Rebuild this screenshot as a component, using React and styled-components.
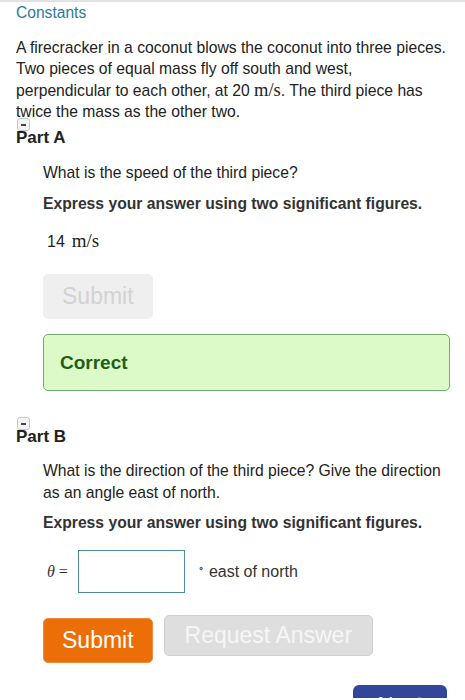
import React from "react";
import styled, { createGlobalStyle } from "styled-components";

const GlobalStyle = createGlobalStyle`
  body {
    margin: 0;
    background: #fff;
    font-family: "Liberation Sans", Arial, sans-serif;
    color: #333;
  }
`;

const Page = styled.div`
  border-top: 2px solid #e2e2e2;
  padding: 0 16px;
  width: 465px;
  box-sizing: border-box;
  height: 698px;
  overflow: hidden;
`;

const ConstantsLink = styled.div`
  color: #2b7c98;
  font-size: 15.6px;
  line-height: 20px;
  padding-top: 1px;
`;

const Intro = styled.p`
  margin: 14px 0 0;
  font-size: 15.7px;
  line-height: 21.3px;
  color: #222;
`;

const Math = styled.span`
  font-family: "Liberation Serif", "Times New Roman", serif;
  font-size: 18.5px;
  line-height: 1;
`;

const PartHeader = styled.div`
  position: relative;
  margin-top: ${(p) => p.$top}px;
  padding-top: 9px;
`;

const Toggle = styled.span`
  position: absolute;
  left: 1px;
  top: -1px;
  width: 11px;
  height: 11px;
  border: 1px solid #c8c8c8;
  border-radius: 3px;
  background: #f4f4f4;
  &::after {
    content: "";
    position: absolute;
    left: 3px;
    top: 5px;
    width: 5px;
    height: 2px;
    background: #444;
  }
`;

const PartTitle = styled.h2`
  margin: 0;
  font-size: 17px;
  font-weight: bold;
  line-height: 20px;
  color: #222;
`;

const PartBody = styled.div`
  padding-left: 27px;
`;

const Question = styled.p`
  margin: ${(p) => p.$top}px 0 0;
  font-size: 15.7px;
  line-height: 22px;
  color: #222;
`;

const Instruction = styled.p`
  margin: ${(p) => p.$top}px 0 0;
  font-size: 15.7px;
  line-height: 22px;
  font-weight: bold;
  color: #333;
`;

const AnswerLine = styled.div`
  margin-top: 15px;
  padding-left: 4px;
  font-size: 16px;
  line-height: 22px;
  color: #222;
  & span {
    margin-left: 7px;
    font-family: "Liberation Serif", "Times New Roman", serif;
    font-size: 19px;
  }
`;

const Button = styled.button`
  font-family: "Liberation Sans", Arial, sans-serif;
  font-size: 23px;
  border-radius: 5px;
  height: ${(p) => p.$h || 45}px;
  padding: 0 ${(p) => p.$px || 18}px;
  border: 1px solid ${(p) => p.$border};
  background: ${(p) => p.$bg};
  color: ${(p) => p.$color};
  cursor: pointer;
`;

const SubmitRow = styled.div`
  margin-top: ${(p) => p.$top}px;
  display: flex;
  align-items: flex-start;
  gap: 11px;
`;

const CorrectBox = styled.div`
  margin-top: 15px;
  height: 57px;
  box-sizing: border-box;
  border: 1px solid #72a96c;
  border-radius: 5px;
  background: #dcfac8;
  display: flex;
  align-items: center;
  padding-left: 16px;
  font-size: 19px;
  font-weight: bold;
  color: #1d5f14;
  margin-right: -1px;
`;

const InputRow = styled.div`
  margin-top: 16px;
  display: flex;
  align-items: center;
  padding-left: 4px;
`;

const Theta = styled.span`
  font-family: "Liberation Serif", "Times New Roman", serif;
  font-size: 16px;
  color: #333;
  & i {
    margin-right: 4px;
  }
`;

const AnswerInput = styled.input`
  margin-left: 10px;
  width: 107px;
  height: 43px;
  box-sizing: border-box;
  border: 1px solid #4f8a98;
  outline: none;
`;

const Unit = styled.span`
  margin-left: 13px;
  font-size: 16px;
  color: #333;
  & sup {
    font-size: 10px;
    margin-right: 5px;
  }
`;

const Footer = styled.div`
  margin-top: 22px;
  display: flex;
  justify-content: flex-end;
`;

const NextButton = styled.button`
  width: 94px;
  height: 40px;
  border: none;
  border-radius: 6px;
  background: #33479a;
  color: #fff;
  font-family: "Liberation Sans", Arial, sans-serif;
  font-size: 22px;
  margin-right: 2px;
`;

export default function App() {
  return (
    <>
      <GlobalStyle />
      <Page>
        <ConstantsLink>Constants</ConstantsLink>
        <Intro>
          A firecracker in a coconut blows the coconut into three pieces. Two
          pieces of equal mass fly off south and west, perpendicular to each
          other, at 20 <Math>m/s</Math>. The third piece has twice the mass as
          the other two.
        </Intro>

        <PartHeader $top={-3}>
          <Toggle />
          <PartTitle>Part A</PartTitle>
        </PartHeader>
        <PartBody>
          <Question $top={14}>What is the speed of the third piece?</Question>
          <Instruction $top={9}>
            Express your answer using two significant figures.
          </Instruction>
          <AnswerLine>
            14<span>m/s</span>
          </AnswerLine>
          <SubmitRow $top={21}>
            <Button $bg="#efefef" $border="#efefef" $color="#d2d2d2">
              Submit
            </Button>
          </SubmitRow>
          <CorrectBox>Correct</CorrectBox>
        </PartBody>

        <PartHeader $top={27}>
          <Toggle />
          <PartTitle>Part B</PartTitle>
        </PartHeader>
        <PartBody>
          <Question $top={13}>
            What is the direction of the third piece? Give the direction as an
            angle east of north.
          </Question>
          <Instruction $top={8}>
            Express your answer using two significant figures.
          </Instruction>
          <InputRow>
            <Theta>
              <i>θ</i>=
            </Theta>
            <AnswerInput />
            <Unit>
              <sup>∘</sup>east of north
            </Unit>
          </InputRow>
          <SubmitRow $top={22}>
            <Button
              $bg="#ec6e09"
              $border="#f08a3a"
              $color="#fff"
              style={{ marginTop: 3 }}
            >
              Submit
            </Button>
            <Button
              $bg="#dedede"
              $border="#d0d0d0"
              $color="#f6f6f6"
              $h={41}
              $px={20}
            >
              Request Answer
            </Button>
          </SubmitRow>
        </PartBody>
        <Footer>
          <NextButton>Next</NextButton>
        </Footer>
      </Page>
    </>
  );
}
